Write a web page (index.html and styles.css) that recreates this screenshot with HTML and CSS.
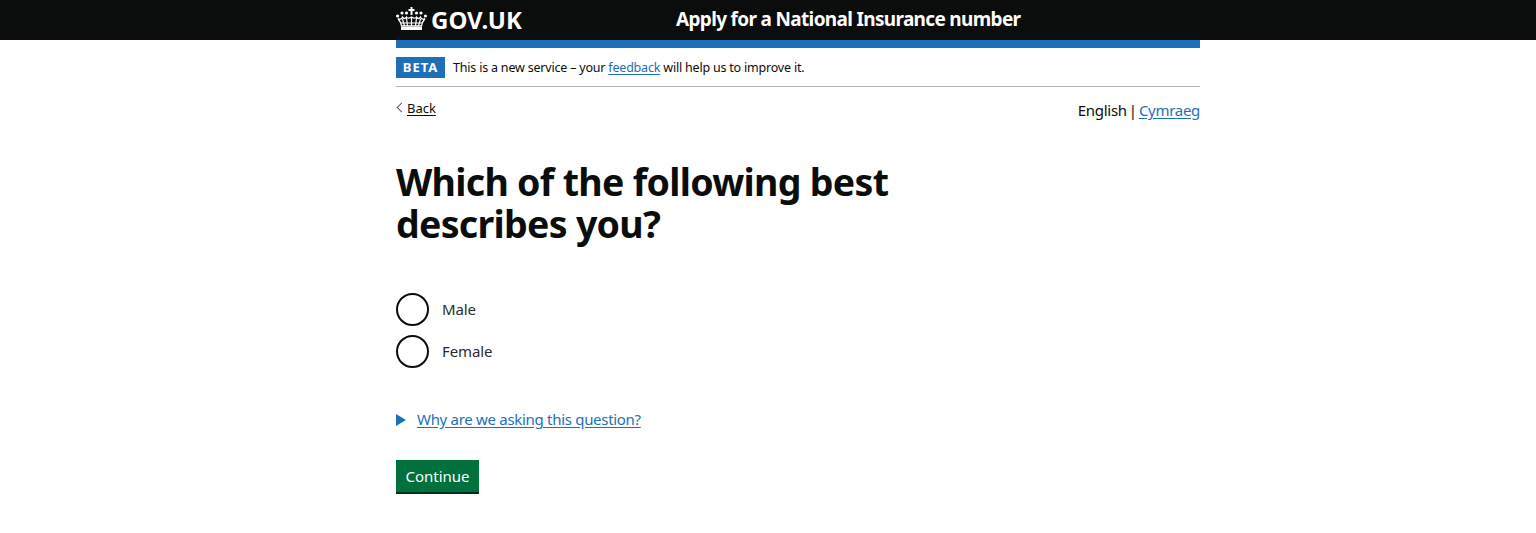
FILE: index.html
```html
<!DOCTYPE html>
<html lang="en">
<head>
    <meta charset="UTF-8">
    <title>Apply for a National Insurance number</title>
    <link rel="stylesheet" href="styles.css">
</head>
<body>
    <header class="site-header">
        <div class="width-container header-inner">
            <a class="logo" href="#">
                <svg class="crown" viewBox="0 0 31 23" width="31" height="23" aria-hidden="true">
                    <g fill="none" stroke="#fff">
                        <path d="M15.500 0v8M12.500 3h6" stroke-width="2"/>
                        <path d="M5.500 19c-.3-2.500-1.500-5-3.500-7.500 2 1.200 3.500 1 4.500-1.500 1 2 3 2 4 0 1 1.500 3 1.500 5 0 2 1.500 4 1.500 5 0 1 2 3 2 4 0 1 2.500 2.500 2.700 4.500 1.500-2 2.500-3.200 5-3.500 7.500z" stroke-width="1.300"/>
                        <path d="M15.500 10v9M10.500 11l1 8M20.500 11l-1 8M6.500 12l2 7M24.500 12l-2 7M5 16h21" stroke-width="1.200"/>
                        <path d="M5 21.500h21" stroke-width="3"/>
                    </g>
                    <g fill="#fff">
                        <circle cx="1.600" cy="9" r="1.600"/>
                        <circle cx="6" cy="6" r="1.600"/>
                        <circle cx="10.500" cy="6" r="1.600"/>
                        <circle cx="20.500" cy="6" r="1.600"/>
                        <circle cx="25" cy="6" r="1.600"/>
                        <circle cx="29.400" cy="9" r="1.600"/>
                    </g>
                </svg>
                <span class="logo-text">GOV.UK</span>
            </a>
            <a class="service-name" href="#">Apply for a National Insurance number</a>
        </div>
    </header>

    <div class="width-container">
        <div class="blue-bar"></div>

        <div class="phase-banner">
            <strong class="phase-tag">BETA</strong>
            <span class="phase-text">This is a new service – your <a href="#">feedback</a> will help us to improve it.</span>
        </div>

        <div class="nav-row">
            <a class="back-link" href="#">Back</a>
            <div class="language-select">English | <a href="#">Cymraeg</a></div>
        </div>

        <main class="main">
            <form>
                <h1>Which of the following best describes you?</h1>

                <div class="radios">
                    <label class="radio-item"><input type="radio" name="gender" value="male"><span class="radio-mark"></span><span class="radio-label">Male</span></label>
                    <label class="radio-item"><input type="radio" name="gender" value="female"><span class="radio-mark"></span><span class="radio-label">Female</span></label>
                </div>

                <div class="details">
                    <span class="details-arrow"></span>
                    <a class="details-link" href="#">Why are we asking this question?</a>
                </div>

                <button type="submit" class="button">Continue</button>
            </form>
        </main>
    </div>
</body>
</html>
```

FILE: styles.css
```css
body {
    margin: 0;
    font-family: "Noto Sans", Arial, sans-serif;
    color: #0b0c0c;
    background: #fff;
}

a {
    color: #1d70b8;
    text-underline-offset: 2px;
}

.width-container {
    width: 804px;
    margin-left: 396px;
}

.site-header {
    background: #0b0c0c;
    height: 40px;
}

.header-inner {
    display: flex;
    align-items: center;
    height: 40px;
}

.logo {
    display: flex;
    align-items: center;
    width: 280px;
    color: #fff;
    text-decoration: none;
}

.crown {
    margin-right: 4px;
    margin-bottom: 3px;
}

.logo-text {
    margin-bottom: 2px;
    font-size: 24px;
    font-weight: 700;
}

.service-name {
    margin-bottom: 2px;
    color: #fff;
    text-decoration: none;
    font-size: 19px;
    font-weight: 700;
    letter-spacing: -0.67px;
}

.blue-bar {
    height: 8px;
    background: #1d70b8;
}

.phase-banner {
    display: flex;
    align-items: center;
    height: 38px;
    border-bottom: 1px solid #b1b4b6;
}

.phase-tag {
    background: #1d70b8;
    color: #fff;
    width: 49px;
    height: 21px;
    line-height: 21px;
    text-align: center;
    font-size: 13px;
    letter-spacing: 1px;
    margin-right: 8px;
}

.phase-text {
    font-size: 12.500px;
    letter-spacing: -0.2px;
}

.nav-row {
    display: flex;
    justify-content: space-between;
    align-items: flex-start;
    height: 39px;
}

.back-link {
    position: relative;
    margin-top: 12px;
    padding-left: 11px;
    color: #0b0c0c;
    font-size: 13px;
    line-height: 18px;
}

.back-link::before {
    content: "";
    position: absolute;
    left: 2px;
    top: 5px;
    width: 6px;
    height: 6px;
    border-left: 1px solid #505a5f;
    border-bottom: 1px solid #505a5f;
    transform: rotate(45deg);
}

.language-select {
    margin-top: 13px;
    font-size: 15px;
    line-height: 21px;
    letter-spacing: -0.3px;
    word-spacing: -1.500px;
}

.main {
    padding-top: 35px;
}

h1 {
    width: 530px;
    margin: 0 0 48px;
    font-size: 37.500px;
    line-height: 42px;
    font-weight: 700;
    letter-spacing: -0.7px;
}

.radios {
    display: flex;
    flex-direction: column;
    gap: 9px;
    margin-bottom: 42px;
}

.radio-item {
    display: flex;
    align-items: center;
    height: 33px;
    font-size: 15px;
    letter-spacing: -0.1px;
    color: #2b2b2b;
}

.radio-item input {
    position: absolute;
    opacity: 0;
}

.radio-mark {
    box-sizing: border-box;
    width: 33px;
    height: 33px;
    margin-right: 13px;
    border: 2px solid #0b0c0c;
    border-radius: 50%;
}

.radio-label {
    margin-bottom: 2px;
}

.details {
    display: flex;
    align-items: center;
    height: 20px;
    margin-bottom: 30px;
    font-size: 15px;
    letter-spacing: -0.3px;
}

.details-arrow {
    width: 0;
    height: 0;
    margin-right: 11px;
    border-left: 10px solid #1d70b8;
    border-top: 6px solid transparent;
    border-bottom: 6px solid transparent;
}

.details-link {
    margin-bottom: 2px;
}

.button {
    display: block;
    box-sizing: border-box;
    width: 83px;
    height: 34px;
    padding: 0;
    border: 0;
    border-bottom: 2px solid #002d18;
    background: #00703c;
    color: #fff;
    font-family: inherit;
    font-size: 15px;
}
```
